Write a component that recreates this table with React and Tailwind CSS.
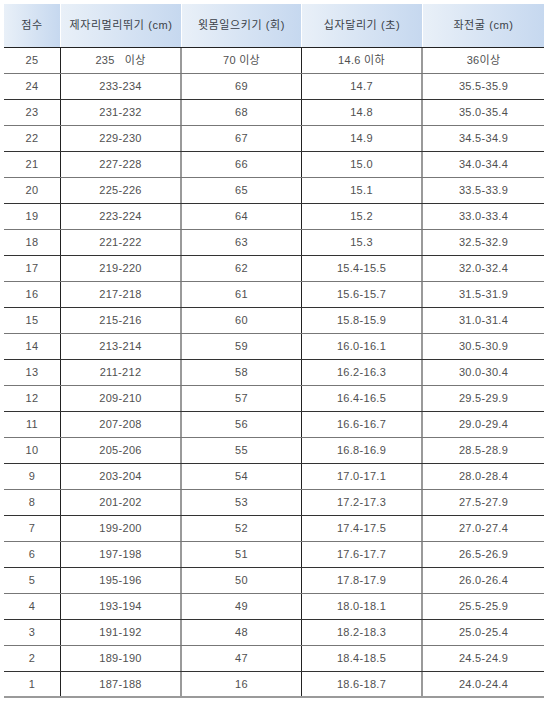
import React from "react";

const headers = ["점수", "제자리멀리뛰기 (cm)", "윗몸일으키기 (회)", "십자달리기 (초)", "좌전굴 (cm)"];

const rows = [
  ["25", "235   이상", "70 이상", "14.6 이하", "36이상"],
  ["24", "233-234", "69", "14.7", "35.5-35.9"],
  ["23", "231-232", "68", "14.8", "35.0-35.4"],
  ["22", "229-230", "67", "14.9", "34.5-34.9"],
  ["21", "227-228", "66", "15.0", "34.0-34.4"],
  ["20", "225-226", "65", "15.1", "33.5-33.9"],
  ["19", "223-224", "64", "15.2", "33.0-33.4"],
  ["18", "221-222", "63", "15.3", "32.5-32.9"],
  ["17", "219-220", "62", "15.4-15.5", "32.0-32.4"],
  ["16", "217-218", "61", "15.6-15.7", "31.5-31.9"],
  ["15", "215-216", "60", "15.8-15.9", "31.0-31.4"],
  ["14", "213-214", "59", "16.0-16.1", "30.5-30.9"],
  ["13", "211-212", "58", "16.2-16.3", "30.0-30.4"],
  ["12", "209-210", "57", "16.4-16.5", "29.5-29.9"],
  ["11", "207-208", "56", "16.6-16.7", "29.0-29.4"],
  ["10", "205-206", "55", "16.8-16.9", "28.5-28.9"],
  ["9", "203-204", "54", "17.0-17.1", "28.0-28.4"],
  ["8", "201-202", "53", "17.2-17.3", "27.5-27.9"],
  ["7", "199-200", "52", "17.4-17.5", "27.0-27.4"],
  ["6", "197-198", "51", "17.6-17.7", "26.5-26.9"],
  ["5", "195-196", "50", "17.8-17.9", "26.0-26.4"],
  ["4", "193-194", "49", "18.0-18.1", "25.5-25.9"],
  ["3", "191-192", "48", "18.2-18.3", "25.0-25.4"],
  ["2", "189-190", "47", "18.4-18.5", "24.5-24.9"],
  ["1", "187-188", "16", "18.6-18.7", "24.0-24.4"],
];

const widths = ["w-[57px]", "w-[121px]", "w-[120px]", "w-[121px]", "w-[121px]"];
const bodyBorders = [
  "border-r border-[#222]",
  "border-r-2 border-[#9a9a9a]",
  "border-r border-[#222]",
  "border-r-2 border-[#9a9a9a]",
  "",
];

export default function App() {
  return (
    <div className="min-h-[702px] bg-white pt-[4px] pl-[4px] font-['Liberation_Sans','Noto_Sans_CJK_KR',sans-serif] text-[11px] text-[#505050] tracking-[0.3px]">
      <div className="w-[540px]">
        {/* Header */}
        <div className="flex h-[44px] border-b border-[#222]">
          {headers.map((h, i) => (
            <div
              key={h}
              className={`${widths[i]} flex items-center justify-center bg-linear-to-r from-[#e9f0f8] to-[#c6d8ef] text-[#3a3f48] tracking-[0.6px] ${
                i < 4 ? "border-r border-white" : ""
              }`}
            >
              {h}
            </div>
          ))}
        </div>

        {/* Body */}
        {rows.map((row, r) => (
          <div
            key={row[0]}
            className={`flex h-[26px] ${
              r === rows.length - 1 ? "border-b-2 border-[#9a9a9a]" : r % 2 === 0 ? "border-b border-[#777]" : "border-b border-[#333]"
            }`}
          >
            {row.map((cell, i) => (
              <div
                key={i}
                className={`${widths[i]} ${bodyBorders[i]} flex items-center justify-center whitespace-pre`}
              >
                {cell}
              </div>
            ))}
          </div>
        ))}
      </div>
    </div>
  );
}
